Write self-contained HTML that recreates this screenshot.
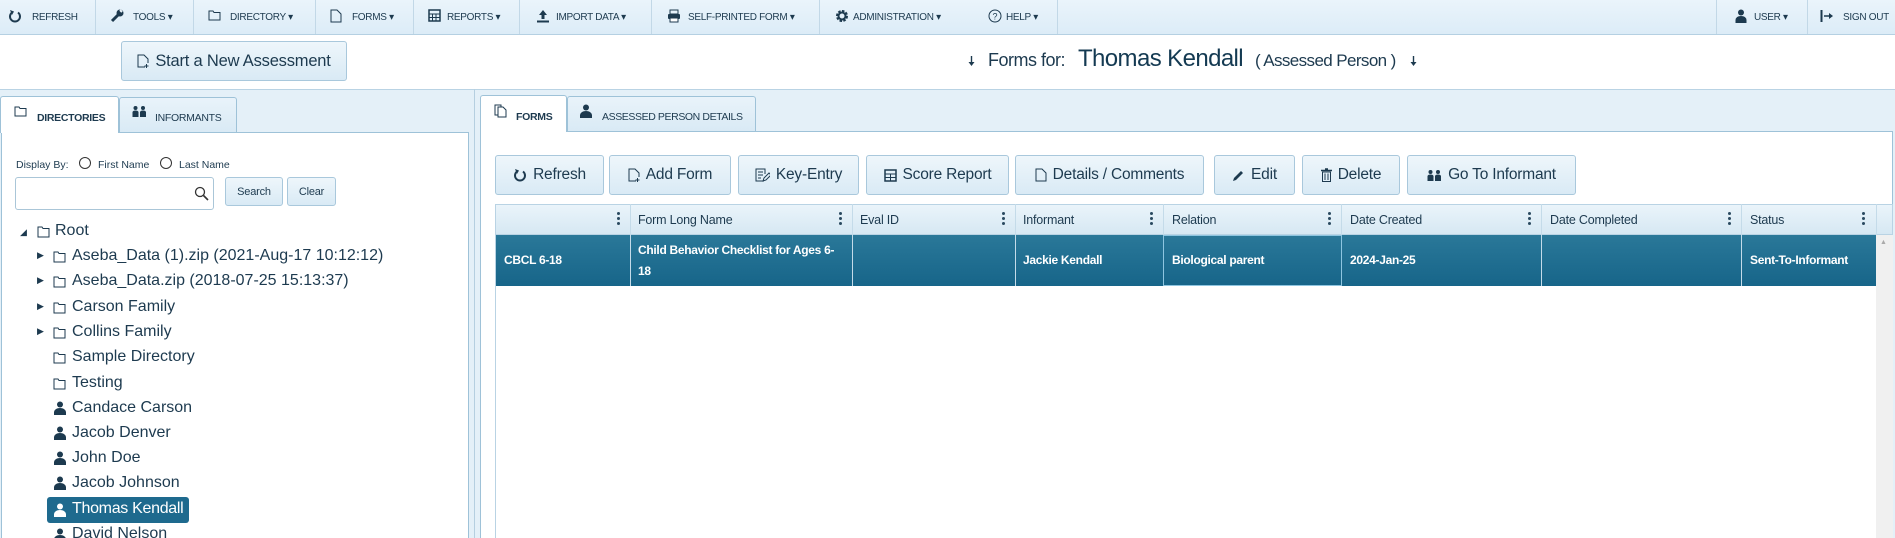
<!DOCTYPE html>
<html><head><meta charset="utf-8"><style>
*{box-sizing:border-box;margin:0;padding:0}
html,body{width:1895px;height:538px;overflow:hidden}
body{background:#fff;font-family:Tahoma,"Liberation Sans",sans-serif;color:#1d3a4f;position:relative}
.a{position:absolute}
.tb{left:0;top:0;width:1895px;height:35px;background:linear-gradient(#eaf4fb,#dcecf7);border-bottom:1px solid #b5d0e2}
.sep{position:absolute;top:0;width:1px;height:34px;background:#c2d8e7}
.ti{position:absolute;top:12px;font-size:10px;color:#1d3a4f;white-space:nowrap;letter-spacing:-.3px}
.ic{position:absolute;top:9px}
.btn{position:absolute;border:1px solid #a9c8dc;border-radius:3px;background:linear-gradient(#eef6fb,#d9eaf5);font-size:15.5px;color:#1d3a4f;white-space:nowrap;display:flex;align-items:center;justify-content:center;gap:6px;letter-spacing:-.2px}
.tab{position:absolute;border:1px solid #9ec2d8;border-bottom:none;border-radius:3px 3px 0 0;font-size:10.5px;white-space:nowrap}
.tr{position:absolute;font-size:16px;white-space:nowrap;color:#1d3a4f}
.col{position:absolute;top:204px;height:82px;border-left:1px solid #c4dbe9}
.hd{position:absolute;top:213px;font-size:12.5px;color:#1d3a4f;white-space:nowrap;letter-spacing:-.2px}
.dots{position:absolute;top:212px;width:3px;font-size:0}
.dots i{display:block;width:3px;height:3px;background:#2a4a60;border-radius:50%;margin-bottom:2px}
.cell{position:absolute;color:#fff;font-size:12px;font-weight:bold;white-space:nowrap;letter-spacing:-.3px}
</style></head><body>

<div class="a tb"></div>
<div class="sep" style="left:95px"></div><div class="sep" style="left:193px"></div><div class="sep" style="left:315px"></div><div class="sep" style="left:413px"></div><div class="sep" style="left:519px"></div><div class="sep" style="left:651px"></div><div class="sep" style="left:819px"></div><div class="sep" style="left:1057px"></div><div class="sep" style="left:1716px"></div><div class="sep" style="left:1807px"></div>

<svg class="ic" style="left:8px" width="14" height="14" viewBox="0 0 14 14"><path d="M4 3.5A5 5 0 1 0 10 3.5" fill="none" stroke="#1d3a4f" stroke-width="2"/><path d="M2 1L6 2.5 4 6z" fill="#1d3a4f"/></svg>
<div class="ti" style="left:32px">REFRESH</div>
<svg class="ic" style="left:110px" width="14" height="14" viewBox="0 0 14 14"><path d="M2 12L8 6" stroke="#1d3a4f" stroke-width="3"/><circle cx="10" cy="4" r="3.5" fill="#1d3a4f"/><path d="M10 1L12 3" stroke="#eaf4fb" stroke-width="2"/></svg>
<div class="ti" style="left:133px">TOOLS ▾</div>
<svg class="ic" style="left:208px" width="13" height="13" viewBox="0 0 13 13"><path d="M1 2h4l1 1.5h6V11H1z" fill="none" stroke="#1d3a4f"/></svg>
<div class="ti" style="left:230px">DIRECTORY ▾</div>
<svg class="ic" style="left:330px" width="12" height="14" viewBox="0 0 12 14"><path d="M1 1h6l4 4v8H1z" fill="none" stroke="#1d3a4f"/></svg>
<div class="ti" style="left:352px">FORMS ▾</div>
<svg class="ic" style="left:428px" width="13" height="13" viewBox="0 0 13 13"><rect x="1" y="1" width="11" height="11" fill="none" stroke="#1d3a4f" stroke-width="1.5"/><path d="M1 5h11M4.5 5v7M8 5v7M1 8.5h11" stroke="#1d3a4f"/></svg>
<div class="ti" style="left:447px">REPORTS ▾</div>
<svg class="ic" style="left:536px" width="14" height="14" viewBox="0 0 14 14"><path d="M7 1L3 6h2.5v4h3V6H11z" fill="#1d3a4f"/><rect x="1" y="11.5" width="12" height="2" fill="#1d3a4f"/></svg>
<div class="ti" style="left:556px">IMPORT DATA ▾</div>
<svg class="ic" style="left:667px" width="14" height="14" viewBox="0 0 14 14"><rect x="3" y="1" width="8" height="4" fill="none" stroke="#1d3a4f"/><rect x="1" y="5" width="12" height="5" rx="1" fill="#1d3a4f"/><rect x="3" y="9" width="8" height="4" fill="#fff" stroke="#1d3a4f"/></svg>
<div class="ti" style="left:688px">SELF-PRINTED FORM ▾</div>
<svg class="ic" style="left:835px" width="14" height="14" viewBox="0 0 14 14"><circle cx="7" cy="7" r="4.5" fill="none" stroke="#1d3a4f" stroke-width="3" stroke-dasharray="2.3 1.2"/><circle cx="7" cy="7" r="3.5" fill="none" stroke="#1d3a4f" stroke-width="2"/></svg>
<div class="ti" style="left:853px">ADMINISTRATION ▾</div>
<svg class="ic" style="left:988px" width="14" height="14" viewBox="0 0 14 14"><circle cx="7" cy="7" r="6" fill="none" stroke="#1d3a4f"/><text x="7" y="10.5" font-size="9" text-anchor="middle" fill="#1d3a4f" font-family="Liberation Sans">?</text></svg>
<div class="ti" style="left:1006px">HELP ▾</div>
<svg class="ic" style="left:1735px" width="12" height="14" viewBox="0 0 12 14"><circle cx="6" cy="3.5" r="3" fill="#1d3a4f"/><path d="M0.5 14V11Q1 7 6 7Q11 7 11.5 11V14z" fill="#1d3a4f"/></svg>
<div class="ti" style="left:1754px">USER ▾</div>
<svg class="ic" style="left:1820px" width="14" height="14" viewBox="0 0 14 14"><path d="M1.5 1v12" stroke="#1d3a4f" stroke-width="2"/><path d="M4 7h6" stroke="#1d3a4f" stroke-width="1.5"/><path d="M9 4l4 3-4 3z" fill="#1d3a4f"/></svg>
<div class="ti" style="left:1843px">SIGN OUT</div>

<div class="btn" style="left:121px;top:41px;width:226px;height:40px;font-size:16.5px"><svg width="12" height="15" viewBox="0 0 12 15"><path d="M8 13H1V1h6l4 4v4" fill="none" stroke="#1d3a4f"/><path d="M9.5 10v4M7.5 12h4" stroke="#1d3a4f"/></svg>Start a New Assessment</div>

<svg class="a" style="left:968px;top:56px" width="7" height="11" viewBox="0 0 7 11"><path d="M3.5 0v7" stroke="#1d3a4f" stroke-width="1.4"/><path d="M0.5 6h6l-3 4z" fill="#1d3a4f"/></svg>
<div class="a" style="left:988px;top:50px;font-size:18px;white-space:nowrap;letter-spacing:-.5px">Forms for:</div>
<div class="a" style="left:1078px;top:45px;font-size:24px;white-space:nowrap;color:#143a52;letter-spacing:-.6px">Thomas Kendall</div>
<div class="a" style="left:1255px;top:51px;font-size:17px;white-space:nowrap;letter-spacing:-.6px">( Assessed Person )</div>
<svg class="a" style="left:1410px;top:56px" width="7" height="11" viewBox="0 0 7 11"><path d="M3.5 0v7" stroke="#1d3a4f" stroke-width="1.4"/><path d="M0.5 6h6l-3 4z" fill="#1d3a4f"/></svg>

<div class="a" style="left:0;top:89px;width:1895px;height:449px;background:#e4f0f8;border-top:1px solid #b9d3e4"></div>
<div class="a" style="left:474px;top:89px;width:1px;height:449px;background:#b5cfe0"></div>

<!-- left panel -->
<div class="a" style="left:1px;top:132px;width:468px;height:406px;background:#fff;border:1px solid #9ec2d8;border-bottom:none"></div>
<div class="tab" style="left:0;top:96px;width:119px;height:37px;background:#fff"></div>
<svg class="a" style="left:14px;top:106px" width="13" height="12" viewBox="0 0 13 12"><path d="M1 1h4l1 1.5h6V10H1z" fill="none" stroke="#1d3a4f"/></svg>
<div class="a" style="left:37px;top:112px;font-size:10.5px;font-weight:bold;white-space:nowrap;letter-spacing:-.3px">DIRECTORIES</div>
<div class="tab" style="left:119px;top:97px;width:118px;height:35px;background:linear-gradient(#e9f3fa,#d9eaf5)"></div>
<svg class="a" style="left:132px;top:106px" width="15" height="11" viewBox="0 0 15 11"><circle cx="3.5" cy="2" r="2" fill="#1d3a4f"/><circle cx="11" cy="2" r="2" fill="#1d3a4f"/><path d="M0.5 11V6Q1 4.5 3.5 4.5Q6 4.5 6.5 6V11zM8 11V6Q8.5 4.5 11 4.5Q13.5 4.5 14 6V11z" fill="#1d3a4f"/></svg>
<div class="a" style="left:155px;top:112px;font-size:10.5px;white-space:nowrap;letter-spacing:-.3px">INFORMANTS</div>

<div class="a" style="left:16px;top:159px;font-size:10.5px;white-space:nowrap">Display By:</div>
<div class="a" style="left:79px;top:157px;width:12px;height:12px;border:1px solid #333;border-radius:50%"></div>
<div class="a" style="left:98px;top:159px;font-size:10.5px;white-space:nowrap">First Name</div>
<div class="a" style="left:160px;top:157px;width:12px;height:12px;border:1px solid #333;border-radius:50%"></div>
<div class="a" style="left:179px;top:159px;font-size:10.5px;white-space:nowrap">Last Name</div>
<div class="a" style="left:15px;top:177px;width:199px;height:33px;border:1px solid #aac6d8;border-radius:3px"></div>
<svg class="a" style="left:194px;top:186px" width="16" height="16" viewBox="0 0 16 16"><circle cx="6" cy="6" r="4.5" fill="none" stroke="#333" stroke-width="1.3"/><path d="M9.5 9.5L14 14" stroke="#333" stroke-width="1.6"/></svg>
<div class="btn" style="left:225px;top:177px;width:58px;height:29px;font-size:11px">Search</div>
<div class="btn" style="left:287px;top:177px;width:49px;height:29px;font-size:11px">Clear</div>

<div class="a" style="left:20px;top:227px;font-size:9px">&#9698;</div>
<svg class="a" style="left:37px;top:226px" width="13" height="12" viewBox="0 0 13 12"><path d="M1 1h4l1 1.5h6V11H1z" fill="none" stroke="#1d3a4f"/></svg>
<div class="tr" style="left:55px;top:222px">Root</div>

<div class="a" style="left:37px;top:250px;font-size:9px">&#9654;</div>
<div class="a" style="left:37px;top:275px;font-size:9px">&#9654;</div>
<div class="a" style="left:37px;top:301px;font-size:9px">&#9654;</div>
<div class="a" style="left:37px;top:326px;font-size:9px">&#9654;</div>

<svg class="a" style="left:53px;top:251px" width="13" height="12" viewBox="0 0 13 12"><path d="M1 1h4l1 1.5h6V11H1z" fill="none" stroke="#1d3a4f"/></svg>
<div class="tr" style="left:72px;top:247px">Aseba_Data (1).zip (2021-Aug-17 10:12:12)</div>
<svg class="a" style="left:53px;top:276px" width="13" height="12" viewBox="0 0 13 12"><path d="M1 1h4l1 1.5h6V11H1z" fill="none" stroke="#1d3a4f"/></svg>
<div class="tr" style="left:72px;top:272px">Aseba_Data.zip (2018-07-25 15:13:37)</div>
<svg class="a" style="left:53px;top:302px" width="13" height="12" viewBox="0 0 13 12"><path d="M1 1h4l1 1.5h6V11H1z" fill="none" stroke="#1d3a4f"/></svg>
<div class="tr" style="left:72px;top:298px">Carson Family</div>
<svg class="a" style="left:53px;top:327px" width="13" height="12" viewBox="0 0 13 12"><path d="M1 1h4l1 1.5h6V11H1z" fill="none" stroke="#1d3a4f"/></svg>
<div class="tr" style="left:72px;top:323px">Collins Family</div>
<svg class="a" style="left:53px;top:352px" width="13" height="12" viewBox="0 0 13 12"><path d="M1 1h4l1 1.5h6V11H1z" fill="none" stroke="#1d3a4f"/></svg>
<div class="tr" style="left:72px;top:348px">Sample Directory</div>
<svg class="a" style="left:53px;top:378px" width="13" height="12" viewBox="0 0 13 12"><path d="M1 1h4l1 1.5h6V11H1z" fill="none" stroke="#1d3a4f"/></svg>
<div class="tr" style="left:72px;top:374px">Testing</div>

<svg class="a" style="left:54px;top:401px" width="12" height="14" viewBox="0 0 12 14"><circle cx="6" cy="3.5" r="3" fill="#1d3a4f"/><path d="M0 14V11Q1 7 6 7Q11 7 12 11V14z" fill="#1d3a4f"/></svg>
<div class="tr" style="left:72px;top:399px">Candace Carson</div>
<svg class="a" style="left:54px;top:426px" width="12" height="14" viewBox="0 0 12 14"><circle cx="6" cy="3.5" r="3" fill="#1d3a4f"/><path d="M0 14V11Q1 7 6 7Q11 7 12 11V14z" fill="#1d3a4f"/></svg>
<div class="tr" style="left:72px;top:424px">Jacob Denver</div>
<svg class="a" style="left:54px;top:451px" width="12" height="14" viewBox="0 0 12 14"><circle cx="6" cy="3.5" r="3" fill="#1d3a4f"/><path d="M0 14V11Q1 7 6 7Q11 7 12 11V14z" fill="#1d3a4f"/></svg>
<div class="tr" style="left:72px;top:449px">John Doe</div>
<svg class="a" style="left:54px;top:476px" width="12" height="14" viewBox="0 0 12 14"><circle cx="6" cy="3.5" r="3" fill="#1d3a4f"/><path d="M0 14V11Q1 7 6 7Q11 7 12 11V14z" fill="#1d3a4f"/></svg>
<div class="tr" style="left:72px;top:474px">Jacob Johnson</div>
<div class="a" style="left:47px;top:497px;width:142px;height:26px;background:#1e6a8e;border-radius:3px"></div>
<svg class="a" style="left:54px;top:503px" width="12" height="14" viewBox="0 0 12 14"><circle cx="6" cy="3.5" r="3" fill="#fff"/><path d="M0 14V11Q1 7 6 7Q11 7 12 11V14z" fill="#fff"/></svg>
<div class="tr" style="left:72px;top:500px;color:#fff;letter-spacing:-.3px">Thomas Kendall</div>
<svg class="a" style="left:54px;top:528px" width="12" height="14" viewBox="0 0 12 14"><circle cx="6" cy="3.5" r="3" fill="#1d3a4f"/><path d="M0 14V11Q1 7 6 7Q11 7 12 11V14z" fill="#1d3a4f"/></svg>
<div class="tr" style="left:72px;top:525px">David Nelson</div>

<!-- right panel -->
<div class="a" style="left:480px;top:131px;width:1413px;height:407px;background:#fff;border:1px solid #9ec2d8;border-bottom:none"></div>
<div class="tab" style="left:480px;top:95px;width:87px;height:37px;background:#fff"></div>
<svg class="a" style="left:494px;top:104px" width="13" height="14" viewBox="0 0 13 14"><path d="M1 1h6v10H1z" fill="none" stroke="#1d3a4f"/><path d="M4 3h5l3 3v7H4z" fill="#fff" stroke="#1d3a4f"/></svg>
<div class="a" style="left:516px;top:111px;font-size:10.5px;font-weight:bold;white-space:nowrap;letter-spacing:-.3px">FORMS</div>
<div class="tab" style="left:567px;top:96px;width:189px;height:35px;background:linear-gradient(#e9f3fa,#d9eaf5)"></div>
<svg class="a" style="left:580px;top:104px" width="12" height="14" viewBox="0 0 12 14"><circle cx="6" cy="3.5" r="3" fill="#1d3a4f"/><path d="M0 14V11Q1 7 6 7Q11 7 12 11V14z" fill="#1d3a4f"/></svg>
<div class="a" style="left:602px;top:111px;font-size:10.5px;white-space:nowrap;letter-spacing:-.4px">ASSESSED PERSON DETAILS</div>

<div class="btn" style="left:495px;top:155px;width:109px;height:40px"><svg width="14" height="14" viewBox="0 0 14 14"><path d="M4 3.5A5 5 0 1 0 10 3.5" fill="none" stroke="#1d3a4f" stroke-width="2"/><path d="M2 1L6 2.5 4 6z" fill="#1d3a4f"/></svg>Refresh</div>
<div class="btn" style="left:609px;top:155px;width:122px;height:40px"><svg width="12" height="15" viewBox="0 0 12 15"><path d="M8 13H1V1h6l4 4v4" fill="none" stroke="#1d3a4f"/><path d="M9.5 10v4M7.5 12h4" stroke="#1d3a4f"/></svg>Add Form</div>
<div class="btn" style="left:738px;top:155px;width:121px;height:40px"><svg width="15" height="15" viewBox="0 0 15 15"><path d="M9 13H1V1h9v5" fill="none" stroke="#1d3a4f"/><path d="M3 4h5M3 7h5M3 10h3" stroke="#1d3a4f"/><path d="M8 13l1-3 5-5 2 2-5 5z" fill="none" stroke="#1d3a4f"/></svg>Key-Entry</div>
<div class="btn" style="left:866px;top:155px;width:143px;height:40px"><svg width="13" height="13" viewBox="0 0 13 13"><rect x="1" y="1" width="11" height="11" fill="none" stroke="#1d3a4f" stroke-width="1.5"/><path d="M1 5h11M6.5 5v7M1 8.5h11" stroke="#1d3a4f"/></svg>Score Report</div>
<div class="btn" style="left:1015px;top:155px;width:189px;height:40px"><svg width="12" height="14" viewBox="0 0 12 14"><path d="M1 1h6l4 4v8H1z" fill="none" stroke="#1d3a4f"/></svg>Details / Comments</div>
<div class="btn" style="left:1214px;top:155px;width:81px;height:40px"><svg width="13" height="13" viewBox="0 0 13 13"><path d="M1 12l1-3 7-7 2 2-7 7z" fill="#1d3a4f"/></svg>Edit</div>
<div class="btn" style="left:1302px;top:155px;width:98px;height:40px"><svg width="11" height="14" viewBox="0 0 11 14"><path d="M0 2.5h11M4 1h3" stroke="#1d3a4f" stroke-width="1.5"/><path d="M1.5 4h8v9.5h-8z" fill="none" stroke="#1d3a4f"/><path d="M4 5.5v6.5M7 5.5v6.5" stroke="#1d3a4f"/></svg>Delete</div>
<div class="btn" style="left:1407px;top:155px;width:169px;height:40px"><svg width="15" height="11" viewBox="0 0 15 11"><circle cx="3.5" cy="2" r="2" fill="#1d3a4f"/><circle cx="11" cy="2" r="2" fill="#1d3a4f"/><path d="M0.5 11V6Q1 4.5 3.5 4.5Q6 4.5 6.5 6V11zM8 11V6Q8.5 4.5 11 4.5Q13.5 4.5 14 6V11z" fill="#1d3a4f"/></svg>Go To Informant</div>

<!-- grid -->
<div class="a" style="left:495px;top:204px;width:1398px;height:334px;border:1px solid #b9d3e4;border-bottom:none;background:#fff"></div>
<div class="a" style="left:496px;top:205px;width:1396px;height:30px;background:linear-gradient(#eaf4fa,#d6e8f3);border-bottom:1px solid #b9d3e4"></div>
<div class="a" style="left:1876px;top:235px;width:17px;height:303px;background:#f0f0f0"></div>
<div class="a" style="left:1880px;top:239px;font-size:7px;color:#aaa">&#9650;</div>
<div class="a" style="left:496px;top:235px;width:1380px;height:51px;background:linear-gradient(#2a7899,#176589)"></div>
<div class="col" style="left:630px"></div><div class="col" style="left:852px"></div><div class="col" style="left:1015px"></div><div class="col" style="left:1163px"></div><div class="col" style="left:1341px"></div><div class="col" style="left:1541px"></div><div class="col" style="left:1741px"></div><div class="col" style="left:1876px;height:31px"></div>
<div class="a" style="left:1163px;top:235px;width:179px;height:51px;border:1px solid #8ec5e0"></div>

<div class="dots" style="left:617px"><i></i><i></i><i></i></div>
<div class="hd" style="left:638px">Form Long Name</div><div class="dots" style="left:839px"><i></i><i></i><i></i></div>
<div class="hd" style="left:860px">Eval ID</div><div class="dots" style="left:1002px"><i></i><i></i><i></i></div>
<div class="hd" style="left:1023px">Informant</div><div class="dots" style="left:1150px"><i></i><i></i><i></i></div>
<div class="hd" style="left:1172px">Relation</div><div class="dots" style="left:1328px"><i></i><i></i><i></i></div>
<div class="hd" style="left:1350px">Date Created</div><div class="dots" style="left:1528px"><i></i><i></i><i></i></div>
<div class="hd" style="left:1550px">Date Completed</div><div class="dots" style="left:1728px"><i></i><i></i><i></i></div>
<div class="hd" style="left:1750px">Status</div><div class="dots" style="left:1862px"><i></i><i></i><i></i></div>

<div class="cell" style="left:504px;top:253px">CBCL 6-18</div>
<div class="cell" style="left:638px;top:243px">Child Behavior Checklist for Ages 6-</div>
<div class="cell" style="left:638px;top:264px">18</div>
<div class="cell" style="left:1023px;top:253px">Jackie Kendall</div>
<div class="cell" style="left:1172px;top:253px">Biological parent</div>
<div class="cell" style="left:1350px;top:253px">2024-Jan-25</div>
<div class="cell" style="left:1750px;top:253px">Sent-To-Informant</div>
</body></html>
